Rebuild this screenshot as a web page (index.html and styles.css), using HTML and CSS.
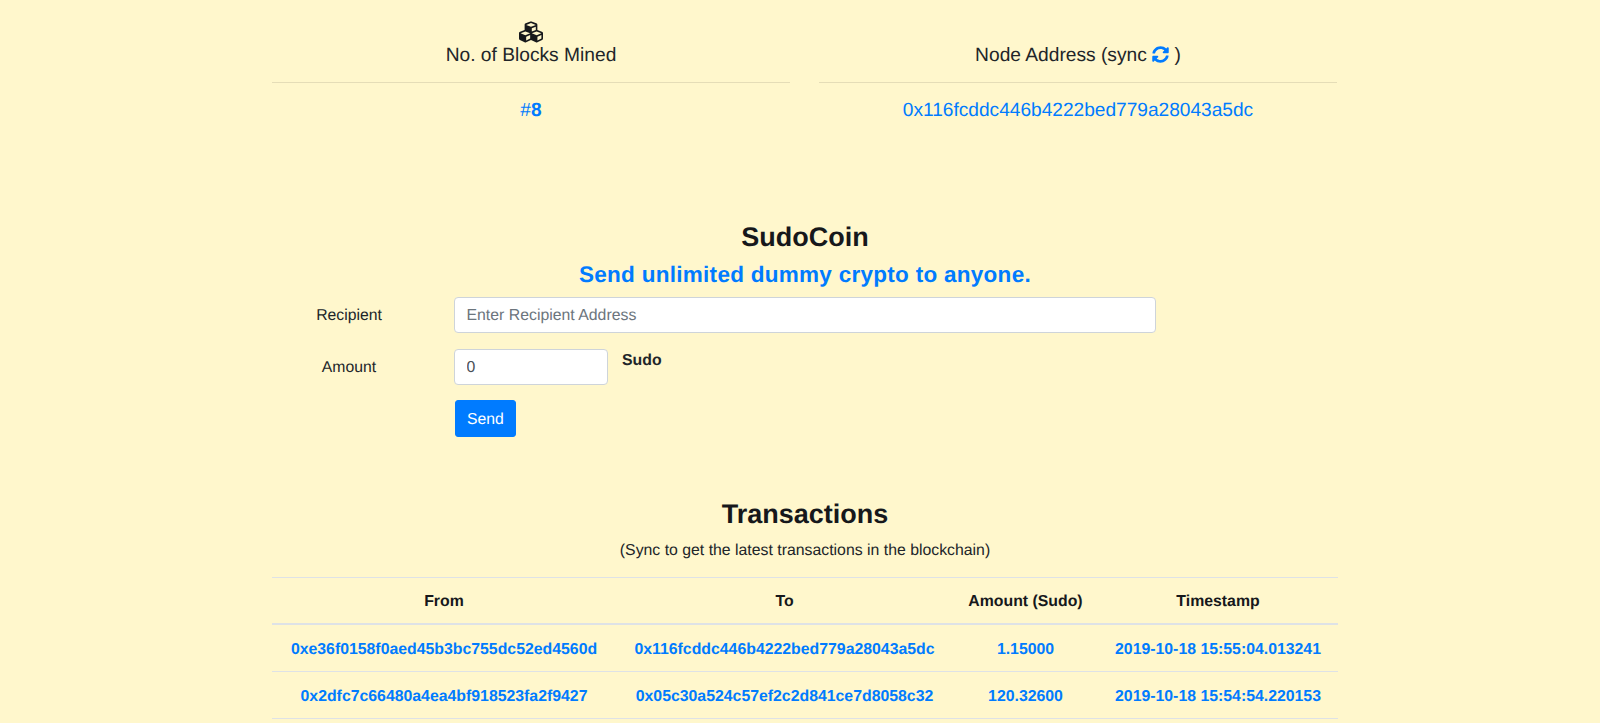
FILE: index.html
```html
<!DOCTYPE html>
<html lang="en">
<head>
<meta charset="utf-8">
<title>SudoCoin</title>
<link rel="stylesheet" href="styles.css">
</head>
<body>
<main class="page">
  <section class="stats">
    <div class="stat">
      <div class="stat-head">
        <svg class="cubes" viewBox="0 0 512 512"><path d="M488.6 250.2L392 214V105.5c0-15-9.3-28.4-23.4-33.7l-100-37.5c-8.1-3.1-17.1-3.1-25.3 0l-100 37.5c-14.1 5.3-23.4 18.7-23.4 33.7V214l-96.6 36.2C9.3 255.5 0 268.9 0 283.9V394c0 13.6 7.7 26.1 19.9 32.2l100 50c10.1 5.1 22.1 5.1 32.2 0l103.9-52 103.9 52c10.1 5.1 22.1 5.1 32.2 0l100-50c12.2-6.1 19.9-18.6 19.9-32.2V283.9c0-15-9.3-28.4-23.4-33.7zM358 214.8l-85 31.9v-68.2l85-37v73.3zM154 104.1l102-38.2 102 38.2v.6l-102 41.4-102-41.4v-.6zm84 291.1l-85 42.5v-79.1l85-38.8v75.4zm0-112l-102 41.4-102-41.4v-.6l102-38.2 102 38.2v.6zm240 112l-85 42.5v-79.1l85-38.8v75.4zm0-112l-102 41.4-102-41.4v-.6l102-38.2 102 38.2v.6z"/></svg>
        <div class="stat-title">No. of Blocks Mined</div>
      </div>
      <div class="stat-value"><span class="hash">#</span><b>8</b></div>
    </div>
    <div class="stat">
      <div class="stat-head">
        <div class="stat-title">Node Address (sync <svg class="sync" viewBox="0 0 512 512"><path d="M370.72 133.28C339.458 104.008 298.888 87.962 255.848 88c-77.458.068-144.328 53.178-162.791 126.85-1.344 5.363-6.122 9.15-11.651 9.15H24.103c-7.498 0-13.194-6.807-11.807-14.176C33.933 94.924 134.813 8 256 8c66.448 0 126.791 26.136 171.315 68.685L463.03 40.97C478.149 25.851 504 36.559 504 57.941V192c0 13.255-10.745 24-24 24H345.941c-21.382 0-32.09-25.851-16.971-40.971l41.75-41.749zM32 296h134.059c21.382 0 32.09 25.851 16.971 40.971l-41.75 41.75c31.262 29.273 71.835 45.319 114.876 45.28 77.418-.07 144.315-53.144 162.787-126.849 1.344-5.363 6.122-9.15 11.651-9.15h57.304c7.498 0 13.194 6.807 11.807 14.176C478.067 417.076 377.187 504 256 504c-66.448 0-126.791-26.136-171.315-68.685L48.97 471.03C33.851 486.149 8 475.441 8 454.059V320c0-13.255 10.745-24 24-24z"/></svg> )</div>
      </div>
      <div class="stat-value">0x116fcddc446b4222bed779a28043a5dc</div>
    </div>
  </section>

  <section class="send">
    <h2 class="title">SudoCoin</h2>
    <h4 class="subtitle">Send unlimited dummy crypto to anyone.</h4>
    <form class="form">
      <div class="row">
        <label class="label">Recipient</label>
        <input class="input input-wide" placeholder="Enter Recipient Address">
      </div>
      <div class="row">
        <label class="label">Amount</label>
        <input class="input input-small" value="0">
        <span class="unit">Sudo</span>
      </div>
      <div class="row-button">
        <button class="button" type="button">Send</button>
      </div>
    </form>
  </section>

  <section class="transactions">
    <h2 class="title">Transactions</h2>
    <p class="note">(Sync to get the latest transactions in the blockchain)</p>
    <table class="table">
      <colgroup><col class="c1"><col class="c2"><col class="c3"><col class="c4"></colgroup>
      <thead>
        <tr><th>From</th><th>To</th><th>Amount (Sudo)</th><th>Timestamp</th></tr>
      </thead>
      <tbody>
        <tr><td>0xe36f0158f0aed45b3bc755dc52ed4560d</td><td>0x116fcddc446b4222bed779a28043a5dc</td><td>1.15000</td><td>2019-10-18 15:55:04.013241</td></tr>
        <tr><td>0x2dfc7c66480a4ea4bf918523fa2f9427</td><td>0x05c30a524c57ef2c2d841ce7d8058c32</td><td>120.32600</td><td>2019-10-18 15:54:54.220153</td></tr>
      </tbody>
    </table>
  </section>
</main>
</body>
</html>
```

FILE: styles.css
```css
* { box-sizing: border-box; }
html, body { margin: 0; height: 723px; overflow: hidden; }
body {
  background: #fff7cc;
  color: #212529;
  font-family: "Liberation Sans", Arial, sans-serif;
  font-size: 15.84px;
  line-height: 1.5;
  text-rendering: geometricPrecision;
}
.page { width: 1066px; margin-left: 272px; }

.stats { display: grid; grid-template-columns: 518px 518px; column-gap: 29px; padding-top: 20px; }
.stat { text-align: center; }
.stat-head { height: 63px; border-bottom: 1px solid rgba(0, 0, 0, .1); display: flex; flex-direction: column; justify-content: flex-end; padding-bottom: 12px; }
.stat-title { font-size: 19.2px; line-height: 29px; color: #212529; }
.cubes { width: 24px; height: 24px; display: block; margin: 0 auto -3px; fill: #16181b; }
.sync { width: 17px; height: 17px; fill: #007bff; vertical-align: -2px; }
.stat-value { margin-top: 13px; font-size: 19.125px; line-height: 29px; color: #007bff; }
.hash { font-weight: 400; }

.send { margin-top: 95px; }
.title { margin: 0; text-align: center; font-size: 27px; line-height: 34px; font-weight: 700; color: #16181b; }
.subtitle { margin: 4px 0 0; text-align: center; font-size: 22.5px; letter-spacing: .28px; line-height: 34px; font-weight: 700; color: #007bff; }
.form { margin-top: 5px; }
.row { display: flex; align-items: flex-start; height: 52px; }
.row + .row { height: 51px; }
.label { width: 182px; padding-top: 7px; padding-right: 28px; text-align: center; font-size: 15.75px; line-height: 24px; color: #212529; }
.input { height: 36px; padding: 7px 11.5px 5px; background: #fff; border: 1px solid #ced4da; border-radius: 4px; font: 15.84px/24px "Liberation Sans", Arial, sans-serif; color: #495057; text-rendering: geometricPrecision; }
.input::placeholder { color: #6c757d; opacity: 1; }
.input-wide { width: 702px; }
.input-small { width: 154px; }
.unit { margin-left: 14px; font-weight: 700; font-size: 15.84px; line-height: 24px; color: #212529; }
.row-button { padding-left: 183px; }
.button { width: 61px; height: 37px; padding: 2px 0 0; background: #007bff; border: 1px solid #007bff; border-radius: 3px; color: #fff; font: 15.75px "Liberation Sans", Arial, sans-serif; text-rendering: geometricPrecision; }

.transactions { margin-top: 60px; }
.note { margin: 8px 0 14px; text-align: center; font-size: 15.84px; line-height: 24px; }
.table { width: 1066px; border-collapse: collapse; table-layout: fixed; }
.c1 { width: 344px; }
.c2 { width: 337px; }
.c3 { width: 145px; }
.c4 { width: 240px; }
th, td { text-align: center; font-size: 15.84px; font-weight: 700; border-top: 1px solid #dee2e6; }
th { height: 46px; padding: 3px 0 0; color: #16181b; border-bottom: 2px solid #dee2e6; }
td { height: 47.6px; padding: 4px 0 0; color: #007bff; border-bottom: 1px solid #dee2e6; }
```
